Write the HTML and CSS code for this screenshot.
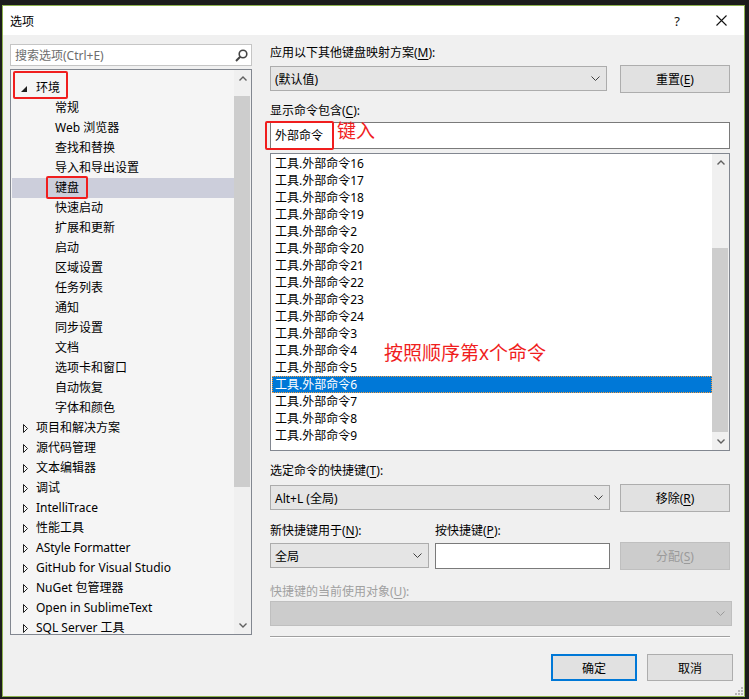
FILE: index.html
```html
<!DOCTYPE html>
<html lang="zh-CN">
<head>
    <meta charset="UTF-8">
    <title>选项</title>
    <link rel="stylesheet" href="styles.css">
</head>
<body>
    <div class="dialog">
        <div class="titlebar">
            <span class="title">选项</span>
            <span class="help">?</span>
            <svg class="close" width="11" height="11" viewBox="0 0 11 11"><path d="M0.5 0.5 L10.5 10.5 M10.5 0.5 L0.5 10.5" stroke="#111" stroke-width="1.1" fill="none"/></svg>
        </div>

        <div class="content">
            <!-- left: search + category tree -->
            <div class="left">
                <div class="search">
                    <span class="placeholder">搜索选项(Ctrl+E)</span>
                    <svg width="13" height="13" viewBox="0 0 13 13"><circle cx="8" cy="5" r="3.8" stroke="#444" stroke-width="1.6" fill="none"/><path d="M5.2 7.8 L1 12" stroke="#444" stroke-width="2" fill="none"/></svg>
                </div>
                <div class="tree">
                    <ul class="tree-items">
                        <li class="node"><span class="twisty"><svg width="6" height="6" viewBox="0 0 6 6"><polygon points="6,0 6,6 0,6" fill="#1e1e1e"/></svg></span>环境<span class="mark mark-env"></span></li>
                        <li class="leaf">常规</li>
                        <li class="leaf">Web 浏览器</li>
                        <li class="leaf">查找和替换</li>
                        <li class="leaf">导入和导出设置</li>
                        <li class="leaf selected">键盘<span class="mark mark-kbd"></span></li>
                        <li class="leaf">快速启动</li>
                        <li class="leaf">扩展和更新</li>
                        <li class="leaf">启动</li>
                        <li class="leaf">区域设置</li>
                        <li class="leaf">任务列表</li>
                        <li class="leaf">通知</li>
                        <li class="leaf">同步设置</li>
                        <li class="leaf">文档</li>
                        <li class="leaf">选项卡和窗口</li>
                        <li class="leaf">自动恢复</li>
                        <li class="leaf">字体和颜色</li>
                        <li class="node closed"><span class="twisty"><svg width="5" height="9" viewBox="0 0 5 9"><polygon points="0.5,0.5 4.5,4.5 0.5,8.5" fill="none" stroke="#1e1e1e"/></svg></span>项目和解决方案</li>
                        <li class="node closed"><span class="twisty"><svg width="5" height="9" viewBox="0 0 5 9"><polygon points="0.5,0.5 4.5,4.5 0.5,8.5" fill="none" stroke="#1e1e1e"/></svg></span>源代码管理</li>
                        <li class="node closed"><span class="twisty"><svg width="5" height="9" viewBox="0 0 5 9"><polygon points="0.5,0.5 4.5,4.5 0.5,8.5" fill="none" stroke="#1e1e1e"/></svg></span>文本编辑器</li>
                        <li class="node closed"><span class="twisty"><svg width="5" height="9" viewBox="0 0 5 9"><polygon points="0.5,0.5 4.5,4.5 0.5,8.5" fill="none" stroke="#1e1e1e"/></svg></span>调试</li>
                        <li class="node closed"><span class="twisty"><svg width="5" height="9" viewBox="0 0 5 9"><polygon points="0.5,0.5 4.5,4.5 0.5,8.5" fill="none" stroke="#1e1e1e"/></svg></span>IntelliTrace</li>
                        <li class="node closed"><span class="twisty"><svg width="5" height="9" viewBox="0 0 5 9"><polygon points="0.5,0.5 4.5,4.5 0.5,8.5" fill="none" stroke="#1e1e1e"/></svg></span>性能工具</li>
                        <li class="node closed"><span class="twisty"><svg width="5" height="9" viewBox="0 0 5 9"><polygon points="0.5,0.5 4.5,4.5 0.5,8.5" fill="none" stroke="#1e1e1e"/></svg></span>AStyle Formatter</li>
                        <li class="node closed"><span class="twisty"><svg width="5" height="9" viewBox="0 0 5 9"><polygon points="0.5,0.5 4.5,4.5 0.5,8.5" fill="none" stroke="#1e1e1e"/></svg></span>GitHub for Visual Studio</li>
                        <li class="node closed"><span class="twisty"><svg width="5" height="9" viewBox="0 0 5 9"><polygon points="0.5,0.5 4.5,4.5 0.5,8.5" fill="none" stroke="#1e1e1e"/></svg></span>NuGet 包管理器</li>
                        <li class="node closed"><span class="twisty"><svg width="5" height="9" viewBox="0 0 5 9"><polygon points="0.5,0.5 4.5,4.5 0.5,8.5" fill="none" stroke="#1e1e1e"/></svg></span>Open in SublimeText</li>
                        <li class="node closed"><span class="twisty"><svg width="5" height="9" viewBox="0 0 5 9"><polygon points="0.5,0.5 4.5,4.5 0.5,8.5" fill="none" stroke="#1e1e1e"/></svg></span>SQL Server 工具</li>
                    </ul>
                    <div class="vscroll tree-scroll">
                        <div class="arrow"><svg width="8" height="5" viewBox="0 0 8 5"><path d="M0.5 4.5 L4 1 L7.5 4.5" stroke="#606060" stroke-width="1.4" fill="none"/></svg></div>
                        <div class="track"><div class="thumb"></div></div>
                        <div class="arrow"><svg width="8" height="5" viewBox="0 0 8 5"><path d="M0.5 0.5 L4 4 L7.5 0.5" stroke="#606060" stroke-width="1.4" fill="none"/></svg></div>
                    </div>
                </div>
            </div>

            <!-- right: keyboard settings page -->
            <div class="right">
                <div class="label first">应用以下其他键盘映射方案(<u>M</u>):</div>
                <div class="row row-scheme">
                    <div class="combo scheme">(默认值)<svg width="9" height="5" viewBox="0 0 9 5"><path d="M0.5 0.5 L4.5 4.5 L8.5 0.5" stroke="#404040" fill="none"/></svg></div>
                    <div class="btn">重置(<u>E</u>)</div>
                </div>

                <div class="label lbl-filter">显示命令包含(<u>C</u>):</div>
                <div class="filter">外部命令<span class="mark mark-filter"></span><span class="note note-type">键入</span></div>

                <div class="listbox">
                    <ul class="commands">
                        <li>工具.外部命令16</li>
                        <li>工具.外部命令17</li>
                        <li>工具.外部命令18</li>
                        <li>工具.外部命令19</li>
                        <li>工具.外部命令2</li>
                        <li>工具.外部命令20</li>
                        <li>工具.外部命令21</li>
                        <li>工具.外部命令22</li>
                        <li>工具.外部命令23</li>
                        <li>工具.外部命令24</li>
                        <li>工具.外部命令3</li>
                        <li>工具.外部命令4</li>
                        <li>工具.外部命令5</li>
                        <li class="active">工具.外部命令6</li>
                        <li>工具.外部命令7</li>
                        <li>工具.外部命令8</li>
                        <li>工具.外部命令9</li>
                    </ul>
                    <div class="vscroll list-scroll">
                        <div class="arrow"><svg width="8" height="5" viewBox="0 0 8 5"><path d="M0.5 4.5 L4 1 L7.5 4.5" stroke="#606060" stroke-width="1.4" fill="none"/></svg></div>
                        <div class="track"><div class="thumb"></div></div>
                        <div class="arrow"><svg width="8" height="5" viewBox="0 0 8 5"><path d="M0.5 0.5 L4 4 L7.5 0.5" stroke="#606060" stroke-width="1.4" fill="none"/></svg></div>
                    </div>
                    <span class="note note-order">按照顺序第x个命令</span>
                </div>

                <div class="label lbl-shortcut">选定命令的快捷键(<u>T</u>):</div>
                <div class="row row-shortcut">
                    <div class="combo current">Alt+L (全局)<svg width="9" height="5" viewBox="0 0 9 5"><path d="M0.5 0.5 L4.5 4.5 L8.5 0.5" stroke="#404040" fill="none"/></svg></div>
                    <div class="btn">移除(<u>R</u>)</div>
                </div>

                <div class="row labels">
                    <div class="label scope-lbl">新快捷键用于(<u>N</u>):</div>
                    <div class="label">按快捷键(<u>P</u>):</div>
                </div>
                <div class="row row-assign">
                    <div class="combo scope">全局<svg width="9" height="5" viewBox="0 0 9 5"><path d="M0.5 0.5 L4.5 4.5 L8.5 0.5" stroke="#404040" fill="none"/></svg></div>
                    <div class="keys"></div>
                    <div class="btn disabled">分配(<u>S</u>)</div>
                </div>

                <div class="label muted lbl-used">快捷键的当前使用对象(<u>U</u>):</div>
                <div class="combo disabled used"><svg width="9" height="5" viewBox="0 0 9 5"><path d="M0.5 0.5 L4.5 4.5 L8.5 0.5" stroke="#9a9a9a" fill="none"/></svg></div>

                <div class="separator"></div>

                <div class="footer">
                    <div class="btn default">确定</div>
                    <div class="btn">取消</div>
                </div>
            </div>
        </div>

        <svg class="grip" width="8" height="8" viewBox="0 0 8 8">
            <rect x="6" y="0" width="2" height="2" fill="#b8b8b8"/>
            <rect x="3" y="3" width="2" height="2" fill="#b8b8b8"/>
            <rect x="6" y="3" width="2" height="2" fill="#b8b8b8"/>
            <rect x="0" y="6" width="2" height="2" fill="#b8b8b8"/>
            <rect x="3" y="6" width="2" height="2" fill="#b8b8b8"/>
            <rect x="6" y="6" width="2" height="2" fill="#b8b8b8"/>
        </svg>
    </div>
</body>
</html>
```

FILE: styles.css
```css
body {
    margin: 0;
    background: #1c1c1c;
    font-family: "Noto Sans", "Noto Sans CJK SC", sans-serif;
    font-size: 12px;
    color: #000;
}
ul {
    list-style: none;
    margin: 0;
    padding: 0;
}
u {
    text-decoration: underline;
    text-underline-offset: 2px;
}

.dialog {
    position: relative;
    margin: 5px 0 0 2px;
    width: 743px;
    height: 692px;
    box-sizing: border-box;
    border: 1px solid #8db14f;
    background: #f0f0f0;
    display: flex;
    flex-direction: column;
}
.titlebar {
    height: 29px;
    background: #fff;
    display: flex;
    align-items: center;
    padding-left: 7px;
}
.help {
    margin-left: auto;
    font-size: 13px;
    color: #111;
}
.close {
    margin: 0 17px 0 36px;
}

.content {
    flex: 1;
    display: flex;
    gap: 18px;
    padding: 9px 12px 0 7px;
}

/* left column */
.left {
    width: 242px;
    display: flex;
    flex-direction: column;
}
.search {
    height: 22px;
    box-sizing: border-box;
    border: 1px solid #c5c5c5;
    background: #fff;
    display: flex;
    align-items: center;
    justify-content: space-between;
    padding: 0 3px 0 4px;
}
.placeholder {
    color: #6d6d6d;
}
.tree {
    margin-top: 3px;
    height: 566px;
    box-sizing: border-box;
    border: 1px solid #828790;
    background: #f5f5f5;
    display: flex;
    overflow: hidden;
}
.tree-items {
    flex: 1;
    padding: 8px 0 0 1px;
}
.tree-items li {
    position: relative;
    height: 20px;
    line-height: 20px;
    white-space: nowrap;
    display: flex;
    align-items: center;
}
.tree-items .node {
    padding-left: 9px;
}
.tree-items .node .twisty {
    width: 15px;
    display: flex;
    align-items: center;
    padding-top: 2px;
}
.tree-items .closed {
    padding-left: 11px;
}
.tree-items .closed .twisty {
    width: 13px;
    padding-top: 1px;
}
.tree-items .leaf {
    padding-left: 43px;
}
.tree-items .selected {
    background: #cccedb;
}

/* scrollbars */
.vscroll {
    width: 17px;
    display: flex;
    flex-direction: column;
    background: #f0f0f0;
}
.vscroll .arrow {
    height: 17px;
    display: flex;
    align-items: center;
    justify-content: center;
}
.vscroll .track {
    flex: 1;
}
.vscroll .thumb {
    background: #cdcdcd;
    margin: 0 1px 0 0;
}
.tree-scroll .thumb {
    margin-top: 9px;
    height: 391px;
}
.list-scroll .thumb {
    margin-top: 77px;
    height: 184px;
}

/* right column */
.right {
    width: 462px;
    display: flex;
    flex-direction: column;
}
.label {
    line-height: 16px;
    height: 16px;
    white-space: nowrap;
}
.label.first {
    margin-top: 1px;
}
.label.muted {
    color: #a0a0a0;
}
.row {
    display: flex;
    align-items: flex-start;
}
.row-scheme {
    margin-top: 4px;
    gap: 13px;
}
.combo {
    height: 25px;
    box-sizing: border-box;
    border: 1px solid #acacac;
    background: #e5e5e5;
    display: flex;
    align-items: center;
    justify-content: space-between;
    padding: 0 6px 0 4px;
    white-space: nowrap;
}
.combo.scheme {
    width: 337px;
    margin-top: 1px;
}
.btn {
    width: 110px;
    height: 28px;
    box-sizing: border-box;
    border: 1px solid #adadad;
    background: #e1e1e1;
    display: flex;
    align-items: center;
    justify-content: center;
}
.btn.disabled {
    background: #cccccc;
    border-color: #bfbfbf;
    color: #9a9a9a;
}

.lbl-filter {
    margin-top: 10px;
}
.filter {
    position: relative;
    margin-top: 3px;
    width: 460px;
    height: 27px;
    box-sizing: border-box;
    border: 1px solid #7a7a7a;
    background: #fff;
    line-height: 25px;
    padding-left: 4px;
}

.listbox {
    position: relative;
    margin-top: 4px;
    width: 460px;
    height: 298px;
    box-sizing: border-box;
    border: 1px solid #828790;
    background: #fff;
    display: flex;
}
.commands {
    flex: 1;
    padding: 1px 0 0 1px;
}
.commands li {
    height: 17px;
    line-height: 17px;
    padding-left: 3px;
    box-sizing: border-box;
}
.commands .active {
    background: #0078d7;
    color: #fff;
    border: 1px dotted #f39a3c;
    line-height: 15px;
    padding-left: 2px;
}

.lbl-shortcut {
    margin-top: 12px;
}
.row-shortcut {
    margin-top: 5px;
    gap: 10px;
}
.combo.current {
    width: 340px;
    margin-top: 1px;
}
.labels {
    margin-top: 11px;
}
.scope-lbl {
    width: 165px;
}
.row-assign {
    margin-top: 3px;
}
.combo.scope {
    width: 159px;
    margin-top: 1px;
}
.keys {
    margin-left: 6px;
    width: 175px;
    height: 26px;
    margin-top: 1px;
    box-sizing: border-box;
    border: 1px solid #7a7a7a;
    background: #fff;
}
.row-assign .btn {
    margin-left: 10px;
}
.lbl-used {
    margin-top: 14px;
}
.combo.used {
    margin-top: 1px;
    width: 462px;
    justify-content: flex-end;
    background: #cccccc;
    border-color: #bfbfbf;
}

.separator {
    margin-top: 10px;
    width: 460px;
    height: 1px;
    background: #a0a0a0;
    border-bottom: 1px solid #fff;
}
.footer {
    margin: 16px -1px 0 0;
    display: flex;
    justify-content: flex-end;
    gap: 10px;
}
.footer .btn {
    width: 86px;
    height: 27px;
}
.footer .btn.default {
    border: 2px solid #0078d7;
}

/* red hand-drawn notes */
.mark {
    position: absolute;
    border: 2px solid #f01e1e;
    border-radius: 2px;
    box-sizing: border-box;
}
.mark-env {
    left: 1px;
    top: -7px;
    width: 55px;
    height: 28px;
}
.mark-kbd {
    left: 34px;
    top: -2px;
    width: 42px;
    height: 23px;
}
.mark-filter {
    left: -6px;
    top: -2px;
    width: 69px;
    height: 29px;
}
.note {
    position: absolute;
    color: #f01e1e;
    font-size: 19px;
    line-height: 24px;
    white-space: nowrap;
}
.note-type {
    left: 66px;
    top: -4px;
}
.note-order {
    left: 113px;
    top: 187px;
}

.grip {
    position: absolute;
    right: 1px;
    bottom: 1px;
}
```
